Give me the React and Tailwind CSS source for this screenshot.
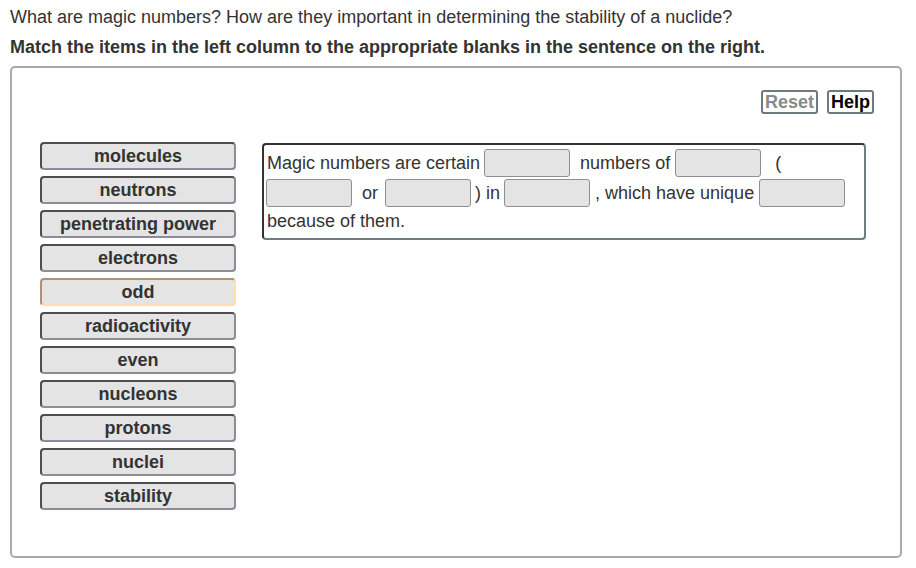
import React from 'react';

const items = [
    'molecules',
    'neutrons',
    'penetrating power',
    'electrons',
    'odd',
    'radioactivity',
    'even',
    'nucleons',
    'protons',
    'nuclei',
    'stability',
];

function Blank({ className = '' }) {
    return (
        <span className={`inline-block shrink-0 w-[86px] h-[28px] bg-[#e4e4e4] border border-[#8e8e96] rounded-[3px] ${className}`} />
    );
}

function Item({ label, active }) {
    return (
        <div
            className={
                'h-[28px] w-[196px] flex items-center justify-center bg-[#e4e4e4] rounded-[4px] border-2 text-[18px] font-bold text-[#333] leading-none ' +
                (active
                    ? 'border-t-[#ad9273] border-l-[#ad9273] border-b-[#fde0ae] border-r-[#fde0ae]'
                    : 'border-t-[#4e4e4e] border-l-[#4e4e4e] border-b-[#8d8c9c] border-r-[#8d8c9c]')
            }
        >
            {label}
        </div>
    );
}

export default function App() {
    return (
        <div className="w-[916px] h-[568px] bg-white font-['Liberation_Sans',Arial,sans-serif] text-[#333] whitespace-nowrap">
            <div className="pl-[10px] pt-[6px]">
                <p className="text-[18px] leading-[22px]">
                    What are magic numbers? How are they important in determining the stability of a nuclide?
                </p>
                <p className="text-[18px] leading-[22px] font-bold mt-[8px]">
                    Match the items in the left column to the appropriate blanks in the sentence on the right.
                </p>
            </div>

            <div className="mt-[8px] ml-[10px] w-[892px] h-[492px] border-2 border-[#a9a9a9] rounded-[5px]">
                {/* Reset / Help */}
                <div className="flex justify-end gap-[9px] pr-[26px] pt-[22px]">
                    <span className="px-[2px] h-[24px] flex items-center border-2 border-[#6e7a80] rounded-[3px] text-[18px] font-bold text-[#8a8a8a]">
                        Reset
                    </span>
                    <span className="px-[2px] h-[24px] flex items-center border-2 border-[#6e7a80] rounded-[3px] text-[18px] font-bold text-black">
                        Help
                    </span>
                </div>

                <div className="flex items-start mt-[28px] pl-[28px]">
                    {/* Left column */}
                    <div className="flex flex-col gap-[6px]">
                        {items.map((it) => (
                            <Item key={it} label={it} active={it === 'odd'} />
                        ))}
                    </div>

                    {/* Sentence */}
                    <div className="ml-[26px] mt-[1px] w-[604px] h-[97px] border-2 border-t-[#333] border-l-[#333] border-b-[#6f7d82] border-r-[#6f7d82] rounded-[4px] pl-[2px] pt-[3px] text-[18px] text-[#333]">
                        <div className="flex items-center h-[30px]">
                            <span className="ml-[1px]">Magic numbers are certain</span>
                            <Blank className="ml-[4px]" />
                            <span className="ml-[10px]">numbers of</span>
                            <Blank className="ml-[5px]" />
                            <span className="ml-[14px]">(</span>
                        </div>
                        <div className="flex items-center h-[30px]">
                            <Blank />
                            <span className="ml-[10px]">or</span>
                            <Blank className="ml-[7px]" />
                            <span className="ml-[4px]">) in</span>
                            <Blank className="ml-[4px]" />
                            <span className="ml-[5px]">, which have unique</span>
                            <Blank className="ml-[5px]" />
                        </div>
                        <div className="h-[26px] flex items-center ml-[1px]">because of them.</div>
                    </div>
                </div>
            </div>
        </div>
    );
}
